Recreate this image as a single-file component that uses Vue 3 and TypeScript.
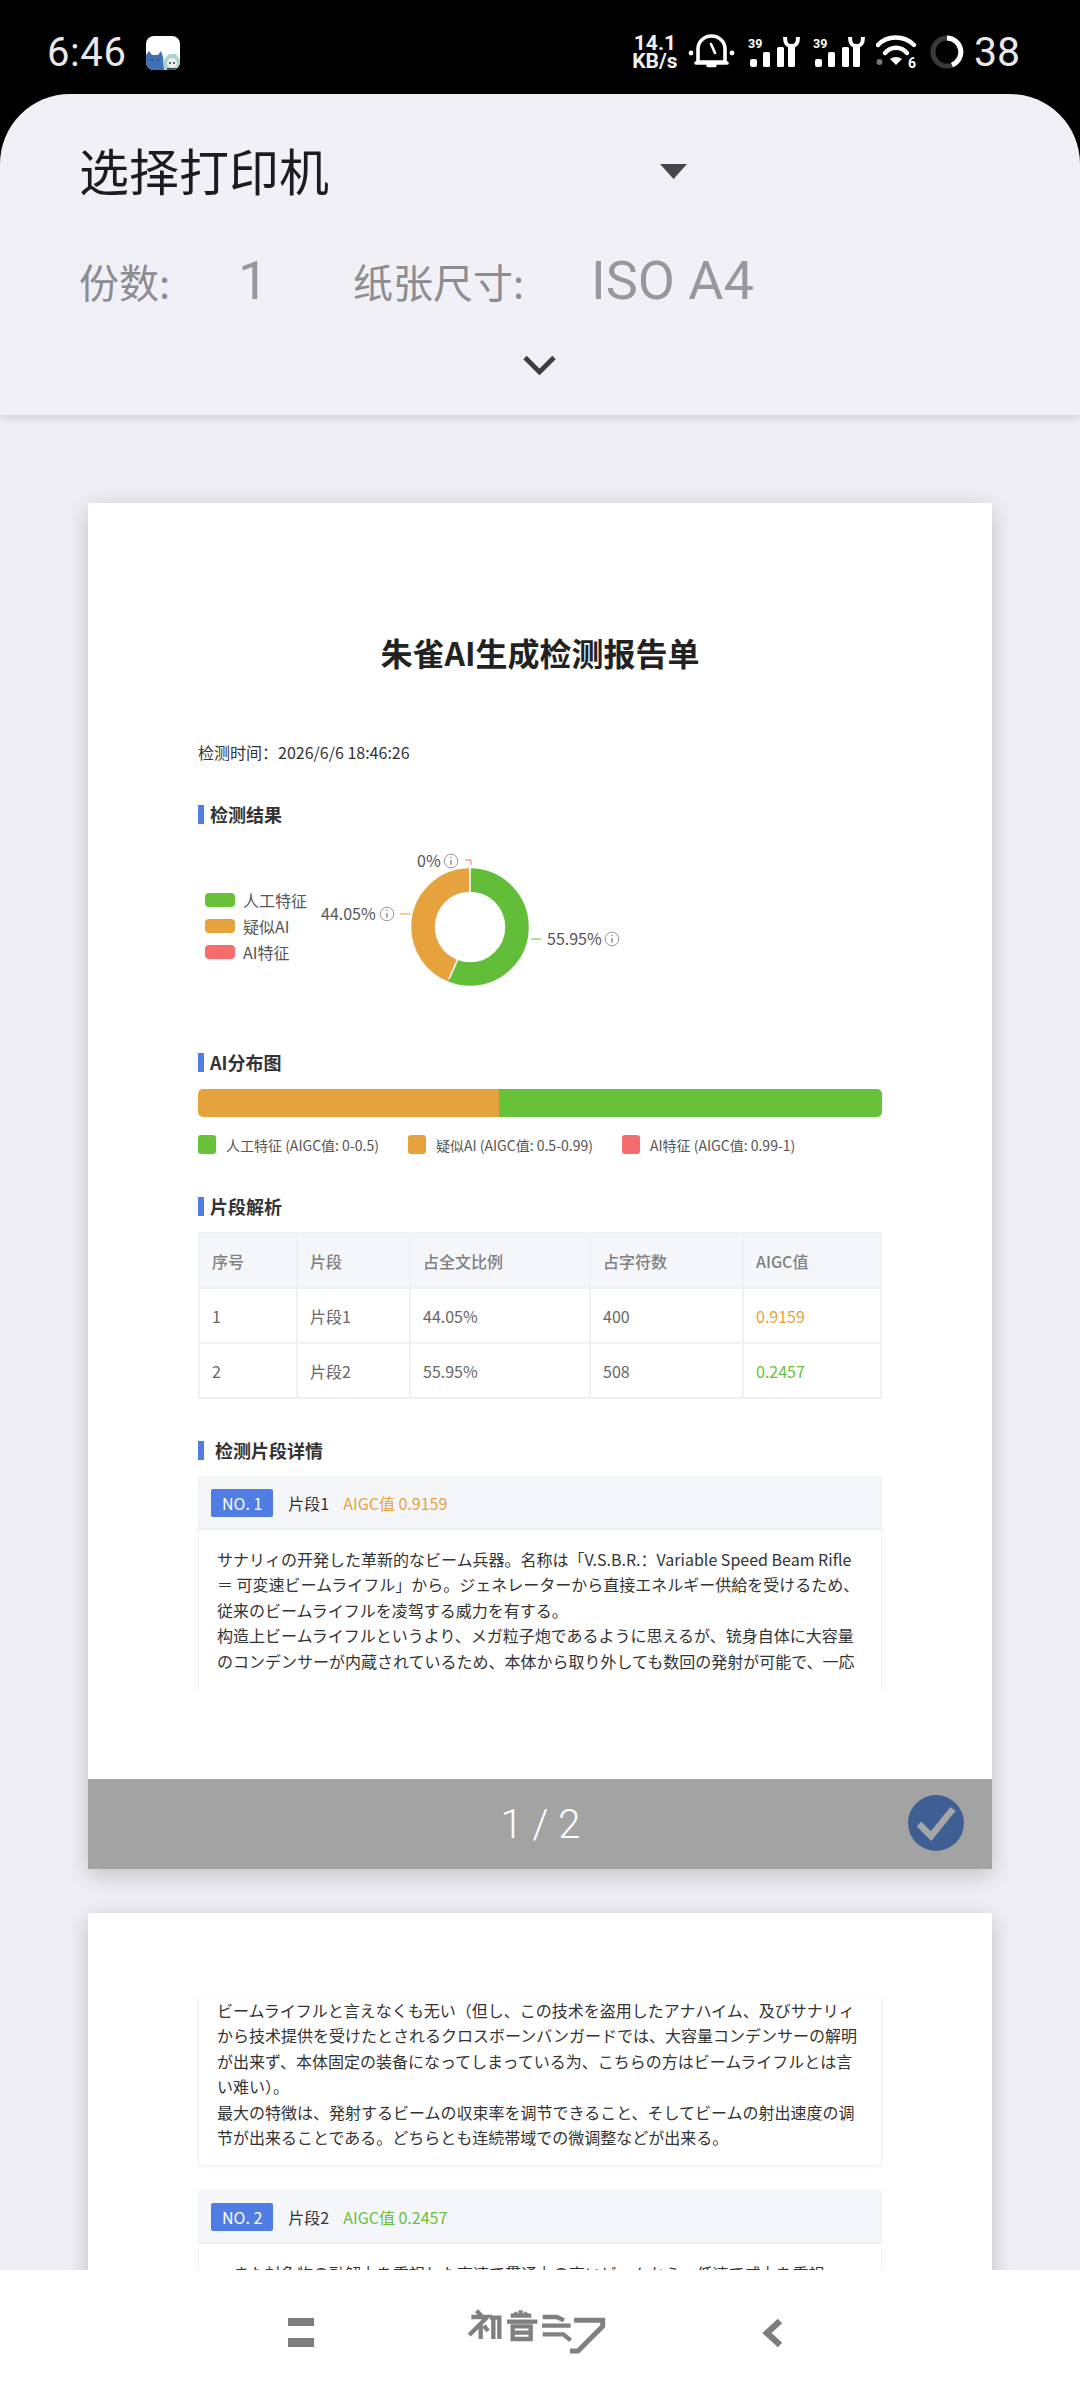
<script setup lang="ts">
interface Row { no: string; seg: string; ratio: string; chars: string; val: string; cls: string }
const rows: Row[] = [
  { no: '1', seg: '片段1', ratio: '44.05%', chars: '400', val: '0.9159', cls: 'orange' },
  { no: '2', seg: '片段2', ratio: '55.95%', chars: '508', val: '0.2457', cls: 'green' },
]
const heads: string[] = ['序号', '片段', '占全文比例', '占字符数', 'AIGC值']
const legend1 = [
  { label: '人工特征', color: '#67c23a' },
  { label: '疑似AI', color: '#e6a23c' },
  { label: 'AI特征', color: '#f56c6c' },
]
const legend2 = [
  { label: '人工特征 (AIGC值: 0-0.5)', color: '#67c23a', w: 210 },
  { label: '疑似AI (AIGC值: 0.5-0.99)', color: '#e6a23c', w: 214 },
  { label: 'AI特征 (AIGC值: 0.99-1)', color: '#f56c6c', w: 170 },
]
const para1: string[] = [
  'サナリィの开発した革新的なビーム兵器。名称は「V.S.B.R.：Variable Speed Beam Rifle',
  '＝ 可変速ビームライフル」から。ジェネレーターから直接エネルギー供給を受けるため、',
  '従来のビームライフルを凌驾する威力を有する。',
  '构造上ビームライフルというより、メガ粒子炮であるように思えるが、铳身自体に大容量',
  'のコンデンサーが内蔵されているため、本体から取り外しても数回の発射が可能で、一応',
]
const para2: string[] = [
  'ビームライフルと言えなくも无い（但し、この技术を盗用したアナハイム、及びサナリィ',
  'から技术提供を受けたとされるクロスボーンバンガードでは、大容量コンデンサーの解明',
  'が出来ず、本体固定の装备になってしまっている为、こちらの方はビームライフルとは言',
  'い难い）。',
  '最大の特徴は、発射するビームの収束率を调节できること、そしてビームの射出速度の调',
  '节が出来ることである。どちらとも连続帯域での微调整などが出来る。',
]
const para3: string[] = ['　また対象物の融解力を重視した高速で貫通力の高いビームから、低速で威力を重視']

const R = 47
const C = 2 * Math.PI * R
const greenLen = C * 0.5595
const orangeLen = C * 0.4405
</script>

<template>
  <div class="screen">
    <div class="status">
      <span class="time">6:46</span>
      <svg class="appicon" viewBox="0 0 34 34" width="34" height="34">
        <defs><clipPath id="ic"><rect width="34" height="34" rx="8" /></clipPath></defs>
        <g clip-path="url(#ic)">
          <rect width="34" height="34" fill="#ffffff" />
          <path d="M0 19 L3 15 L6 19 L12 19 L15 15 L17 21 L18 34 L0 34Z" fill="#3f70b5" />
          <circle cx="6" cy="24" r="1" fill="#27477c" /><circle cx="12" cy="24" r="1" fill="#27477c" />
          <path d="M18 34 L18 23 L23 18 L30 18 L34 24 L34 34Z" fill="#a9d5cf" />
          <circle cx="26" cy="27" r="5" fill="#f3ece6" />
          <circle cx="24" cy="27" r="1" fill="#334" /><circle cx="28" cy="27" r="1" fill="#334" />
          <rect x="21" y="32" width="10" height="2" fill="#3a4c5a" />
        </g>
      </svg>
      <div class="spacer"></div>
      <div class="speed"><span>14.1</span><span>KB/s</span></div>
      <svg class="bell" viewBox="0 0 47 36" width="47" height="36">
        <circle cx="3" cy="19" r="2.4" fill="#fff" />
        <circle cx="44" cy="19" r="2.4" fill="#fff" />
        <path d="M10 28 V15 a13.5 13 0 0 1 27 0 V28 Z" fill="none" stroke="#fff" stroke-width="3.6" stroke-linejoin="round" />
        <path d="M8 29 H39" stroke="#fff" stroke-width="3.6" stroke-linecap="round" />
        <path d="M20 31.5 h7" stroke="#fff" stroke-width="3.4" stroke-linecap="round" />
        <path d="M23 10 L27 19" stroke="#fff" stroke-width="2.6" stroke-linecap="round" />
      </svg>
      <svg v-for="n in 2" :key="n" class="signal" :class="{ 'signal-b': n === 2 }" viewBox="0 0 52 34" width="52" height="34">
        <text x="0" y="13" class="tiny">39</text>
        <rect x="2" y="24" width="7" height="8" rx="2" fill="#fff" />
        <rect x="15" y="17" width="7" height="15" rx="1.5" fill="#fff" />
        <rect x="29" y="12" width="7" height="20" rx="1.5" fill="#fff" />
        <path d="M37 2 C37 9 39 11 43.5 11 C48 11 50 9 50 2" fill="none" stroke="#fff" stroke-width="4" />
        <rect x="40" y="9" width="7" height="23" rx="1.5" fill="#fff" />
      </svg>
      <svg class="wifi" viewBox="0 0 42 38" width="42" height="38">
        <path d="M2 12 C11 2 28 2 38 12" fill="none" stroke="#fff" stroke-width="4.4" stroke-linecap="round" />
        <path d="M9 20 C15 13 25 13 31 20" fill="none" stroke="#fff" stroke-width="4.4" stroke-linecap="round" />
        <path d="M14 26 Q20 22 26 26 L20 32 Z" fill="#fff" />
        <circle cx="3.5" cy="29" r="3" fill="#777" />
        <text x="32" y="35" class="tiny six">6</text>
      </svg>
      <svg class="ring" viewBox="0 0 34 34" width="34" height="34">
        <circle cx="17" cy="17" r="14" fill="none" stroke="#3a3a3a" stroke-width="5" />
        <path d="M17 3 A14 14 0 0 1 22 30" fill="none" stroke="#fff" stroke-width="5" />
      </svg>
      <span class="batt">38</span>
    </div>

    <header class="panel">
      <div class="printer">
        <span class="printer-name">选择打印机</span>
        <svg class="caret" viewBox="0 0 27 15" width="27" height="15"><path d="M0 0H27L13.5 15Z" fill="#48484c" /></svg>
      </div>
      <div class="opts">
        <span class="opt-label copies-label">份数:</span>
        <span class="opt-val copies-val">1</span>
        <span class="opt-label size-label">纸张尺寸:</span>
        <span class="opt-val">ISO A4</span>
      </div>
      <svg class="chev" viewBox="0 0 33 20" width="33" height="20"><path d="M2 2.5 L16.5 17 L31 2.5" fill="none" stroke="#3c3c42" stroke-width="4.8" /></svg>
    </header>

    <main class="preview">
      <section class="sheet">
        <div class="sheet-body">
          <h1 class="doc-title">朱雀AI生成检测报告单</h1>
          <p class="doc-time">检测时间：2026/6/6 18:46:26</p>

          <h2 class="head first"><i></i>检测结果</h2>
          <div class="chart">
            <ul class="chart-legend">
              <li v-for="l in legend1" :key="l.label"><i :style="{ background: l.color }"></i>{{ l.label }}</li>
            </ul>
            <svg class="chart-svg" viewBox="0 0 684 172" width="684" height="172">
              <g transform="translate(272 87)">
                <g transform="rotate(-90)">
                  <circle r="47" fill="none" stroke="#62bd39" stroke-width="23.5" :stroke-dasharray="`${greenLen} ${C}`" />
                  <circle r="47" fill="none" stroke="#e6a23c" stroke-width="23.5" :stroke-dasharray="`${orangeLen} ${C}`" :stroke-dashoffset="-greenLen" />
                </g>
                <path d="M0 -59 V-35" stroke="#fff" stroke-width="1.6" />
                <path d="M-21 52 L-12 32" stroke="#fff" stroke-width="1.6" />
              </g>
              <path d="M267 20 H273 V25" fill="none" stroke="#f56c6c" stroke-width="1" />
              <path d="M202 74 H213" stroke="#e6a23c" stroke-width="1" />
              <path d="M333 99 H343" stroke="#67c23a" stroke-width="1" />
              <text x="219" y="27" class="lbl">0%</text>
              <text x="123" y="80" class="lbl">44.05%</text>
              <text x="349" y="105" class="lbl">55.95%</text>
              <g v-for="p in [[253, 21], [189, 74], [414, 99]]" :key="p[0]" :transform="`translate(${p[0]} ${p[1]})`">
                <circle r="6.8" fill="none" stroke="#8a8a8a" stroke-width="0.9" />
                <path d="M0 -1 V3.8 M0 -4.2 V-3" stroke="#666" stroke-width="1.1" />
              </g>
            </svg>
          </div>

          <h2 class="head ai"><i></i>AI分布图</h2>
          <div class="dist"><span class="dist-a"></span><span class="dist-b"></span></div>
          <ul class="dist-legend">
            <li v-for="l in legend2" :key="l.label" :style="{ width: l.w + 'px' }"><i :style="{ background: l.color }"></i>{{ l.label }}</li>
          </ul>

          <h2 class="head gap40"><i></i>片段解析</h2>
          <table class="tbl">
            <colgroup><col style="width: 98px" /><col style="width: 113px" /><col style="width: 180px" /><col style="width: 153px" /><col /></colgroup>
            <thead><tr><th v-for="h in heads" :key="h">{{ h }}</th></tr></thead>
            <tbody>
              <tr v-for="r in rows" :key="r.no">
                <td>{{ r.no }}</td><td>{{ r.seg }}</td><td>{{ r.ratio }}</td><td>{{ r.chars }}</td>
                <td :class="r.cls">{{ r.val }}</td>
              </tr>
            </tbody>
          </table>

          <h2 class="head gap39 wide"><i></i>检测片段详情</h2>
          <div class="card">
            <div class="card-head">
              <span class="badge">NO. 1</span><span class="seg">片段1</span><span class="orange">AIGC值 0.9159</span>
            </div>
            <div class="card-text"><p v-for="t in para1" :key="t">{{ t }}</p></div>
          </div>
        </div>
        <div class="pager">
          <span class="pager-num">1 / 2</span>
          <svg class="pager-check" viewBox="0 0 56 56" width="56" height="56">
            <circle cx="28" cy="28" r="28" fill="#3f5f94" />
            <path d="M11 29 L23 41 L45 14" fill="none" stroke="#a6a6a8" stroke-width="6.6" />
          </svg>
        </div>
      </section>

      <section class="sheet second">
        <div class="card cont">
          <div class="card-text tail"><p v-for="t in para2" :key="t">{{ t }}</p></div>
        </div>
        <div class="card next">
          <div class="card-head">
            <span class="badge">NO. 2</span><span class="seg">片段2</span><span class="green">AIGC值 0.2457</span>
          </div>
          <div class="card-text"><p v-for="t in para3" :key="t">{{ t }}</p></div>
        </div>
      </section>
    </main>

    <nav class="nav">
      <svg viewBox="0 0 26 29" width="26" height="29" class="nav-menu">
        <rect width="26" height="8" fill="#7d7d7d" /><rect y="20" width="26" height="9" fill="#7d7d7d" />
      </svg>
      <svg class="nav-logo" viewBox="0 0 465 165" width="155" height="55" aria-label="logo">
        <g fill="none" stroke="#808080" stroke-width="13">
          <path d="M68 17 L82 33 M52 36 H100 L46 90" />
          <path d="M80 58 V102 M90 62 L102 78" />
          <path d="M108 38 H136 V102 M118 42 V102" />
          <g transform="translate(4 0)">
            <path d="M166 32 H228 M196 16 V32 M178 22 L184 32 M214 22 L208 32" />
            <path d="M155 50 H246" />
            <path d="M172 64 H226 V102 H172 Z M176 83 H224" />
          </g>
          <g transform="translate(8 0)">
            <path d="M258 36 H300 L322 46 M256 62 H342 M258 88 H320 L342 106" />
          </g>
          <path d="M360 46 H446 V64 L372 138 H348" stroke-width="15" />
        </g>
      </svg>
      <svg viewBox="0 0 22 30" width="22" height="30" class="nav-back">
        <path d="M18 3 L5 15 L18 27" fill="none" stroke="#7d7d7d" stroke-width="6.4" />
      </svg>
    </nav>
  </div>
</template>

<style>
html, body { margin: 0; padding: 0; background: #000; }
</style>

<style scoped>
* { box-sizing: border-box; }
.screen {
  width: 1080px; height: 2400px; overflow: hidden; background: #000;
  display: flex; flex-direction: column;
  font-family: "Noto Sans CJK SC", "Noto Sans", sans-serif; color: #333;
}
.status {
  height: 94px; flex: none; display: flex; align-items: center;
  padding: 10px 60px 0 47px; color: #eee;
}
.time { font: 400 40px Roboto, sans-serif; color: #e8e8e8; letter-spacing: .6px; }
.appicon { margin-left: 19px; margin-top: 2px; }
.spacer { flex: 1; }
.speed {
  display: flex; flex-direction: column; align-items: center; width: 50px;
  font: 700 21px/18px Roboto, sans-serif; color: #f0f0f0;
}
.bell { margin-left: 8px; }
.signal { margin-left: 13px; }
.signal-b { margin-left: 13px; }
.wifi { margin-left: 11px; }
.ring { margin-left: 12px; }
.batt { font: 400 41px Roboto, sans-serif; margin-left: 10px; color: #e8e8e8; }
.tiny { font: 700 12.5px Roboto, sans-serif; fill: #fff; }
.six { font-size: 14px; }

.panel {
  flex: none; height: 321px; background: #f0f0f6; border-radius: 70px 70px 0 0;
  padding: 47px 0 0 79px; position: relative; z-index: 2;
  box-shadow: 0 2px 10px rgba(0, 0, 0, .16);
  display: flex; flex-direction: column;
}
.printer { display: flex; align-items: center; height: 56px; }
.printer-name { font-size: 50px; line-height: 56px; color: #1c1c20; width: 581px; }
.caret { margin-top: 5px; }
.opts { display: flex; align-items: center; height: 60px; margin-top: 54px; }
.opt-label { font-size: 40px; color: #8c8c91; line-height: 60px; }
.opt-val { font: 400 54px/60px Roboto, sans-serif; color: #97979c; }
.copies-label { width: 159px; }
.copies-val { width: 115px; }
.size-label { width: 238px; }
.chev { align-self: flex-start; margin: 44px 0 0 444px; }

.preview {
  flex: 1; min-height: 0; overflow: hidden; background: #eeeef4;
  padding: 88px 88px 0; display: flex; flex-direction: column; gap: 44px;
}
.sheet { flex: none; background: #fff; box-shadow: 0 6px 22px rgba(0, 0, 0, .2); }
.sheet-body { height: 1190px; overflow: hidden; padding: 127px 110px 0; margin-bottom: 86px; }
.doc-title { margin: 0; text-align: center; font-size: 32px; line-height: 44px; font-weight: 700; color: #222; }
.doc-time { margin: 66px 0 0; font-size: 16px; line-height: 24px; color: #333; }
.head {
  margin: 39px 0 14px; display: flex; align-items: center; gap: 6px;
  font-size: 18px; line-height: 24px; font-weight: 700; color: #333;
}
.head.first { margin-top: 38px; margin-bottom: 14px; }
.head.ai { margin-top: 38px; margin-bottom: 15px; }
.head i { width: 6px; height: 19px; background: #4f7de3; flex: none; }
.head.gap40 { margin-top: 40px; }
.head.gap39 { margin-top: 39px; }
.head.wide { gap: 11px; }
.chart { position: relative; height: 172px; }
.chart-legend {
  position: absolute; left: 7px; top: 47px; margin: 0; padding: 0; list-style: none;
  font-size: 16px; line-height: 26px; color: #555;
}
.chart-legend li { display: flex; align-items: center; gap: 8px; height: 26px; }
.chart-legend i { width: 30px; height: 14px; border-radius: 4px; }
.chart-svg { position: absolute; left: 0; top: 0; }
.lbl { font-size: 16px; fill: #555; font-family: "Noto Sans CJK SC", "Noto Sans", sans-serif; }
.dist { display: flex; height: 28px; border-radius: 5px; overflow: hidden; }
.dist-a { width: 44.05%; background: #e6a23c; }
.dist-b { flex: 1; background: #67c23a; }
.dist-legend { display: flex; margin: 18px 0 0; padding: 0; list-style: none; font-size: 14px; color: #555; }
.dist-legend li { display: flex; align-items: center; gap: 10px; height: 19px; white-space: nowrap; }
.dist-legend i { width: 18px; height: 19px; border-radius: 3px; flex: none; }
.tbl { width: 684px; table-layout: fixed; border-collapse: collapse; font-size: 16px; color: #666; }
.tbl th, .tbl td { border: 2px solid #f0f1f5; padding: 0 0 0 12px; text-align: left; font-weight: 400; }
.tbl th { height: 55px; background: #f5f6fa; color: #808080; font-weight: 500; }
.tbl td { height: 55px; }
.tbl td.orange { color: #e6a23c; }
.tbl td.green { color: #67c23a; }
.orange { color: #e6a23c; }
.green { color: #67c23a; }
.card { width: 684px; border: 1px solid #f1f2f5; border-bottom: 0; }
.card-head {
  height: 53px; background: #f5f6fa; border-bottom: 2px solid #eceef2;
  display: flex; align-items: center; padding-left: 12px; font-size: 16px; color: #333;
}
.badge {
  height: 28px; padding: 0 11px; border-radius: 2px; background: #4f7de3; color: #fff;
  line-height: 28px; margin-right: 15px;
}
.seg { margin-right: 14px; }
.card-text { padding: 17px 18px; font-size: 16px; line-height: 25.4px; color: #333; }
.card-text p { margin: 0; white-space: nowrap; }
.second { padding: 84px 110px 0; height: 700px; }
.cont { border-top: 0; border-bottom: 1px solid #f1f2f5; border-radius: 0 0 5px 5px; box-shadow: 0 1px 3px rgba(0, 0, 0, .06); }
.tail { padding-top: 1px; padding-bottom: 15px; }
.next { margin-top: 24px; }
.pager {
  height: 90px; background: #a3a3a4; display: flex; align-items: center; justify-content: center;
  position: relative;
}
.pager-num { font: 300 40px Roboto, sans-serif; color: #fff; margin-left: 1px; }
.pager-check { position: absolute; right: 28px; top: 16px; }
.nav {
  flex: none; height: 130px; background: #fff; position: relative; z-index: 2;
  display: flex; align-items: flex-start;
}
.nav-menu { margin: 48px 0 0 288px; }
.nav-logo { margin: 35px 0 0 140px; }
.nav-back { margin: 48px 0 0 153px; }
</style>
